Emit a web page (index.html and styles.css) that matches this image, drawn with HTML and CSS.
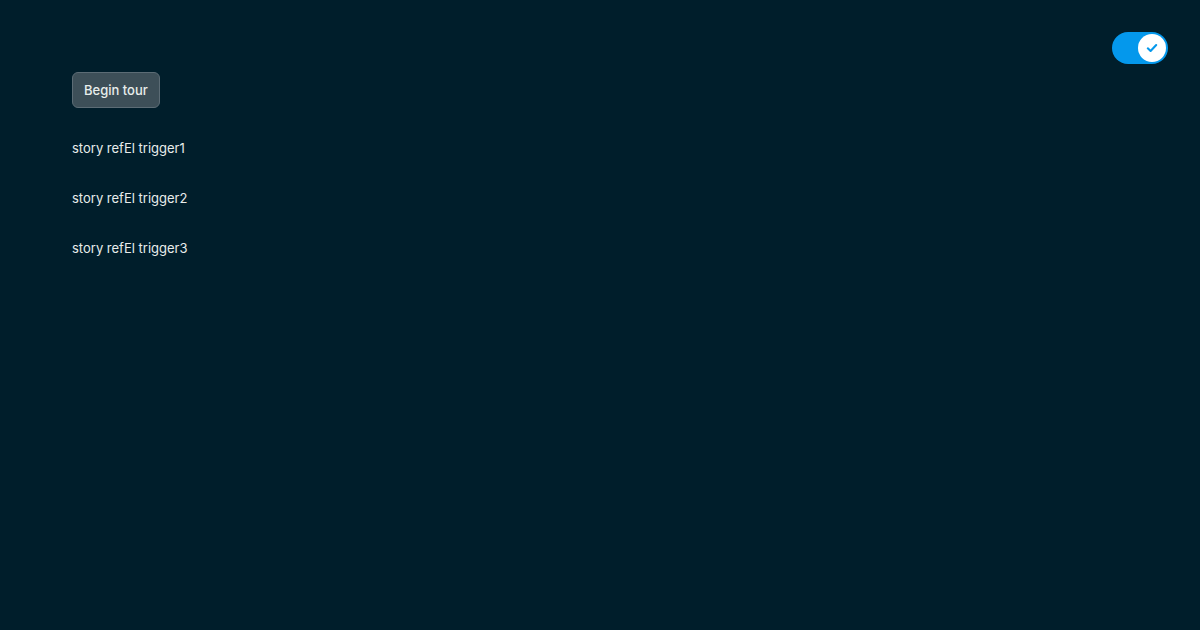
FILE: index.html
```html
<!DOCTYPE html>
<html lang="en">
<head>
<meta charset="utf-8">
<title>Guide Cue</title>
<link rel="stylesheet" href="styles.css">
</head>
<body>
<div class="page">
  <div class="topbar">
    <button class="toggle" type="button" aria-pressed="true" aria-label="Dark mode">
      <span class="knob">
        <svg class="check" viewBox="0 0 16 16" width="14" height="14" aria-hidden="true">
          <path d="M3.2 8.4 L6.4 11.4 L12.8 4.6" fill="none" stroke="currentColor" stroke-width="2.4" stroke-linecap="round" stroke-linejoin="round"/>
        </svg>
      </span>
    </button>
  </div>
  <main class="content">
    <button class="tour-btn" type="button">Begin tour</button>
    <ul class="triggers">
      <li>story refEl trigger1</li>
      <li>story refEl trigger2</li>
      <li>story refEl trigger3</li>
    </ul>
  </main>
</div>
</body>
</html>
```
FILE: styles.css
```css
html, body {
  margin: 0;
  height: 100%;
  background: #001e2b;
}
body {
  font-family: Inter, "Noto Sans", "Liberation Sans", sans-serif;
  color: #e8edeb;
  font-size: 13px;
}
.page {
  padding: 32px;
}
.topbar {
  display: flex;
  justify-content: flex-end;
}
.toggle {
  width: 56px;
  height: 32px;
  border: none;
  border-radius: 16px;
  background: #0498ec;
  padding: 0 2px;
  display: flex;
  align-items: center;
  justify-content: flex-end;
  cursor: pointer;
}
.knob {
  width: 28px;
  height: 28px;
  border-radius: 50%;
  background: #ffffff;
  display: flex;
  align-items: center;
  justify-content: center;
  color: #0498ec;
}
.content {
  margin-top: 8px;
  padding-left: 40px;
  display: flex;
  flex-direction: column;
  align-items: flex-start;
}
.tour-btn {
  height: 36px;
  padding: 0 11px;
  border: 1px solid #5c6c75;
  border-radius: 6px;
  background: #3d4f58;
  color: #e8edeb;
  font-family: inherit;
  font-size: 13px;
  font-weight: 500;
  cursor: pointer;
}
.triggers {
  list-style: none;
  margin: 30px 0 0;
  padding: 0;
  display: flex;
  flex-direction: column;
  gap: 30px;
}
.triggers li {
  line-height: 20px;
}
```
